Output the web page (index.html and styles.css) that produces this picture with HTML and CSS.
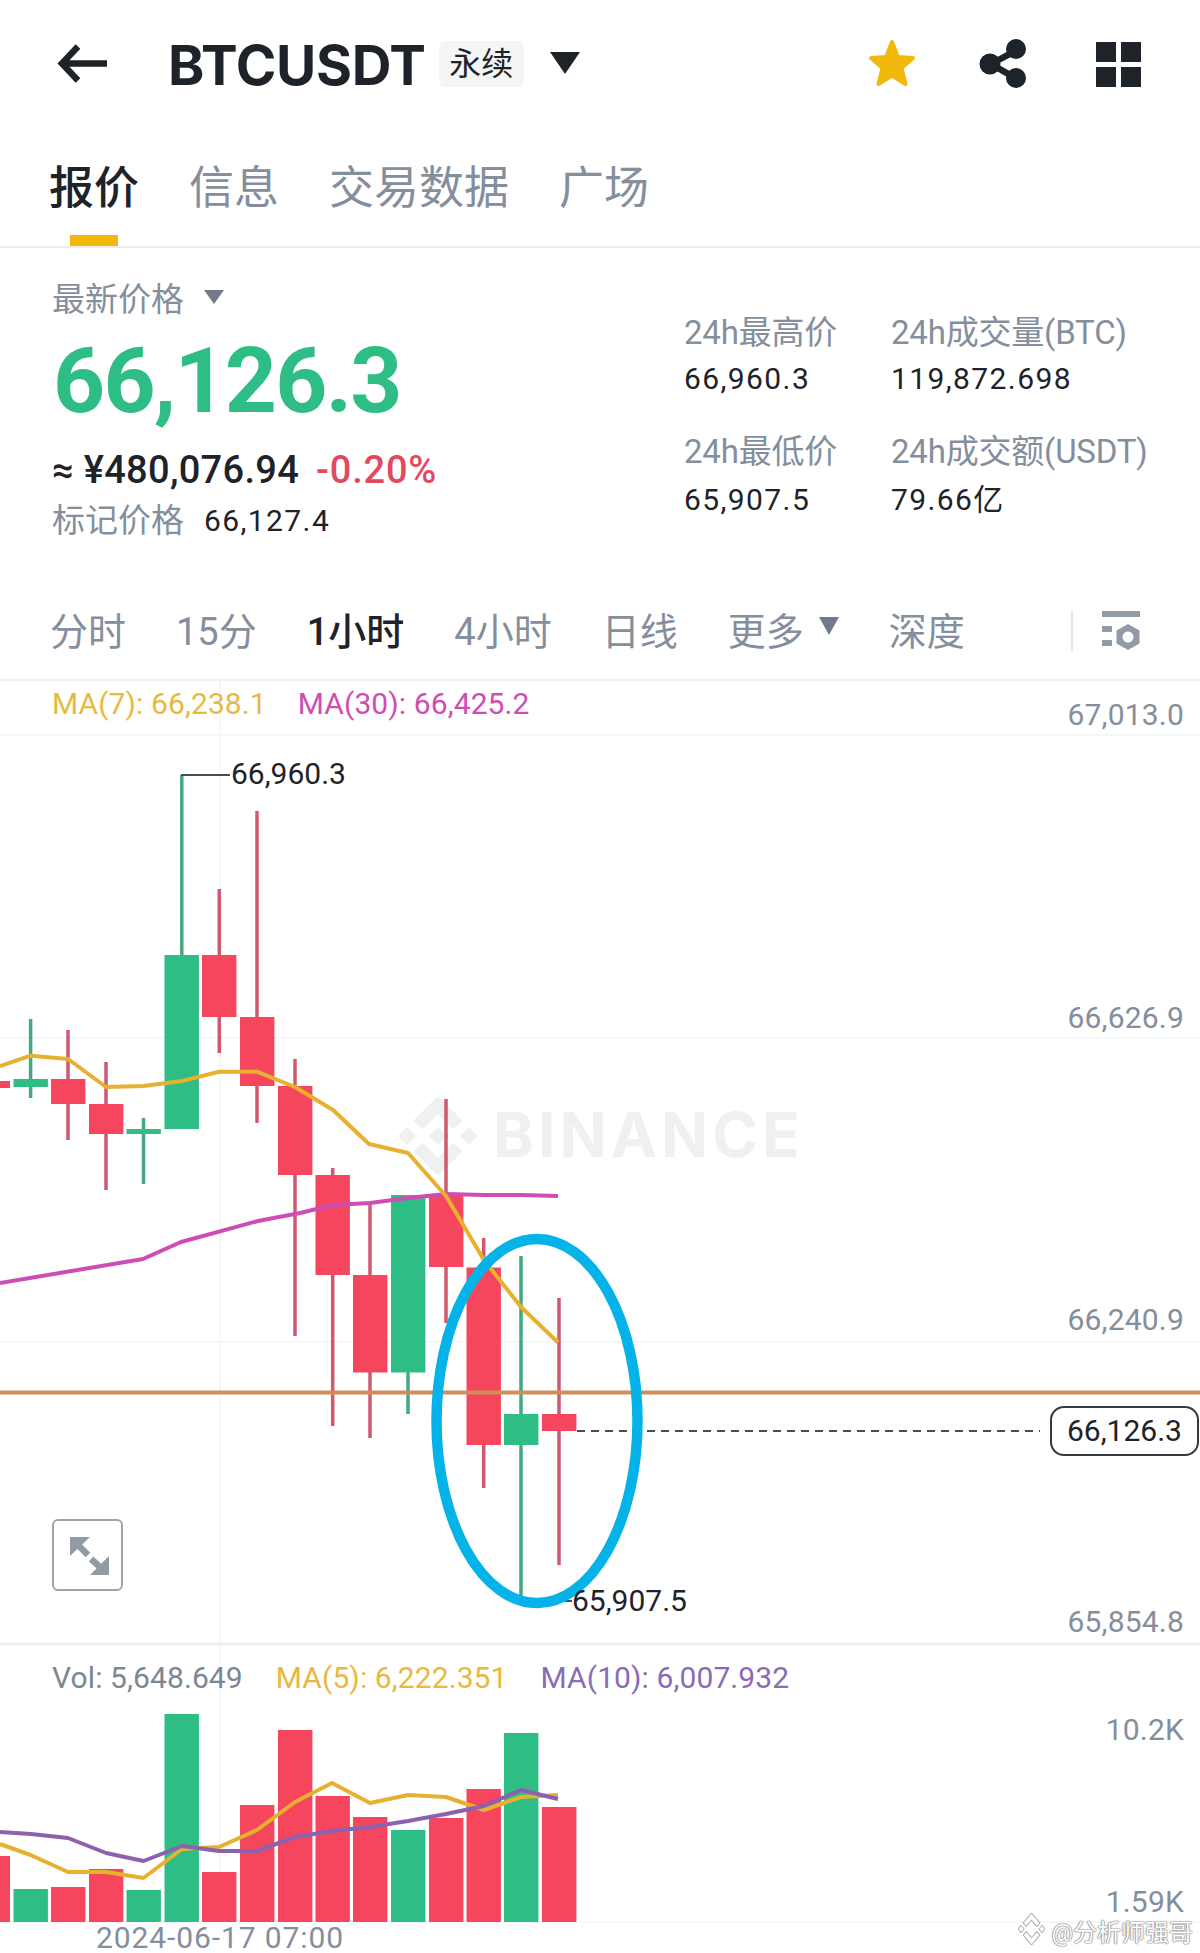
FILE: index.html
```html
<!DOCTYPE html>
<html lang="zh">
<head>
  <meta charset="UTF-8">
  <title>BTCUSDT</title>
  <link rel="stylesheet" href="styles.css">
</head>
<body>
  <!-- top bar -->
  <header class="topbar">
    <svg class="ic-back" width="50" height="40" viewBox="0 0 50 40"><path d="M21 2.500 5 19.500 21 36.500M5 19.500H50" fill="none" stroke="#1e2329" stroke-width="6.500"/></svg>
    <span class="symbol">BTCUSDT</span>
    <span class="badge">永续</span>
    <svg class="ic-caret" width="30" height="22" viewBox="0 0 30 22"><path d="M0 0H30L15 22Z" fill="#1e2329"/></svg>
    <div class="top-icons">
      <svg class="ic-star" width="50" height="50" viewBox="0 0 50 50"><path d="M25 3 31 18 46 19 34.500 29 38.500 45 25 36.500 11.500 45 15.500 29 4 19 19 18Z" fill="#f0b90b" stroke="#f0b90b" stroke-width="4" stroke-linejoin="round"/></svg>
      <svg class="ic-share" width="48" height="50" viewBox="0 0 48 50"><path d="M38 11 12 25 38 40" fill="none" stroke="#1e2329" stroke-width="6.500"/><circle cx="37" cy="10" r="10" fill="#1e2329"/><circle cx="11" cy="25" r="10.500" fill="#1e2329"/><circle cx="37" cy="39" r="10" fill="#1e2329"/></svg>
      <svg width="45" height="45" viewBox="0 0 45 45"><path d="M0 0H20V20H0ZM25 0H45V20H25ZM0 25H20V45H0ZM25 25H45V45H25Z" fill="#1e2329"/></svg>
    </div>
  </header>

  <!-- tabs -->
  <nav class="tabs">
    <a class="tab active">报价</a>
    <a class="tab">信息</a>
    <a class="tab">交易数据</a>
    <a class="tab">广场</a>
  </nav>

  <!-- quote -->
  <section class="quote">
    <div class="quote-main">
      <div class="q-label">最新价格<svg class="ic-small" width="20" height="14" viewBox="0 0 20 14"><path d="M0 0H20L10 14Z" fill="#707a8a"/></svg></div>
      <div class="q-price">66,126.3</div>
      <div class="q-fiat">≈ ¥480,076.94<span class="q-change">-0.20%</span></div>
      <div class="q-mark"><span class="q-label-inline">标记价格</span><span class="q-mark-val">66,127.4</span></div>
    </div>
    <div class="stats">
      <div class="stat-col">
        <div class="st-label">24h最高价</div>
        <div class="st-val">66,960.3</div>
        <div class="st-label st-second">24h最低价</div>
        <div class="st-val">65,907.5</div>
      </div>
      <div class="stat-col">
        <div class="st-label">24h成交量(BTC)</div>
        <div class="st-val">119,872.698</div>
        <div class="st-label st-second">24h成交额(USDT)</div>
        <div class="st-val">79.66亿</div>
      </div>
    </div>
  </section>

  <!-- intervals -->
  <div class="intervals">
    <span>分时</span>
    <span>15分</span>
    <span class="on">1小时</span>
    <span>4小时</span>
    <span>日线</span>
    <span class="more">更多<svg width="20" height="18" viewBox="0 0 20 18"><path d="M0 0H20L10 18Z" fill="#707a8a"/></svg></span>
    <span>深度</span>
    <div class="iv-tools">
      <svg width="38" height="40" viewBox="0 0 38 40"><path d="M0 0H38V6H0ZM0 15H10V21H0ZM0 29H10V35H0Z" fill="#929aa5"/><path d="M26 13 37.500 19.500V32.500L26 39 14.500 32.500V19.500Z" fill="#929aa5"/><circle cx="26" cy="26" r="5.500" fill="#fff"/></svg>
    </div>
  </div>

  <!-- chart -->
  <section class="chart">
    <!-- viewBox is in page coordinates -->
    <svg class="plot" width="1200" height="1272" viewBox="0 681 1200 1272">
      <g class="grid">
        <line x1="0" y1="735" x2="1200" y2="735"/>
        <line x1="0" y1="1038" x2="1200" y2="1038"/>
        <line x1="0" y1="1342" x2="1200" y2="1342"/>
        <line x1="0" y1="1922" x2="1200" y2="1922"/>
        <line x1="220" y1="681" x2="220" y2="1922"/>
      </g>
      <line class="pane-line" x1="0" y1="1644" x2="1200" y2="1644"/>

      <!-- watermark -->
      <svg x="398" y="1096" width="80" height="80" viewBox="0 0 2500 2500"><path class="wm" d="M764.480 1050.520 1250 565l485.750 485.730 282.500-282.500L1250 0 482 768l282.480 282.520M0 1250l282.510-282.550L565 1249.940 282.490 1532.450Zm764.480 199.510L1250 1935l485.740-485.720 282.650 282.350-.14.150L1250 2500 482 1732l-.4-.4 282.880-282.090M1935 1250.120l282.510-282.510L2500 1250.100l-282.500 282.510ZM1536.520 1250h.13L1250 963.190 963.060 1250.100 1250 1537l286.660-286.660Z"/></svg>

      <!-- wicks -->
      <g class="wick-up">
        <line x1="30.600" y1="1019" x2="30.600" y2="1098"/>
        <line x1="143.500" y1="1118" x2="143.500" y2="1184"/>
        <line x1="181.800" y1="775" x2="181.800" y2="955"/>
        <line x1="408" y1="1372" x2="408" y2="1414"/>
      </g>
      <g class="wick-dn">
        <line x1="68" y1="1030" x2="68" y2="1140"/>
        <line x1="106" y1="1062" x2="106" y2="1190"/>
        <line x1="219.300" y1="889" x2="219.300" y2="1053"/>
        <line x1="257" y1="811" x2="257" y2="1123"/>
        <line x1="295" y1="1059" x2="295" y2="1336"/>
        <line x1="332.700" y1="1168" x2="332.700" y2="1426"/>
        <line x1="370" y1="1203" x2="370" y2="1438"/>
        <line x1="446" y1="1099" x2="446" y2="1323"/>
        <line x1="483.700" y1="1238" x2="483.700" y2="1488"/>
        <line x1="559" y1="1298" x2="559" y2="1565"/>
      </g>
      <line class="wick-up thin" x1="521" y1="1256" x2="521" y2="1600"/>

      <!-- candle bodies -->
      <g class="dn">
        <rect x="-10" y="1081" width="20" height="7"/>
        <rect x="51" y="1079" width="34.400" height="25"/>
        <rect x="89" y="1104" width="34.400" height="30"/>
        <rect x="202" y="955" width="34.400" height="62"/>
        <rect x="240" y="1017" width="34.400" height="69"/>
        <rect x="278" y="1086" width="34.400" height="89"/>
        <rect x="315.500" y="1175" width="34.400" height="100"/>
        <rect x="353" y="1275" width="34.400" height="97.500"/>
        <rect x="429" y="1195" width="34.400" height="72"/>
        <rect x="466.500" y="1267.500" width="34.400" height="177.500"/>
        <rect x="542" y="1414" width="34.400" height="17"/>
      </g>
      <g class="up">
        <rect x="13.500" y="1079" width="34.400" height="8"/>
        <rect x="126.500" y="1129" width="34.400" height="5"/>
        <rect x="164.500" y="955" width="34.400" height="174"/>
        <rect x="391" y="1195" width="34.400" height="177.500"/>
        <rect x="504" y="1414" width="34.400" height="31"/>
      </g>

      <!-- price MA lines -->
      <polyline class="l-ma30" points="0,1283 143,1259 181,1242 258,1221 300,1213 333,1205 370,1203 408,1198 446,1194 484,1195 521,1195 558,1196"/>
      <polyline class="l-ma7" points="0,1066 30.600,1055.700 68,1059 106,1087 143.500,1086 182,1081 219,1071.700 257,1071.700 295,1087 333,1110 369,1144 408,1153 446,1196 484,1260 521,1307 558,1342.500"/>

      <!-- last price -->
      <line class="l-last" x1="0" y1="1392.500" x2="1200" y2="1392.500"/>
      <line class="l-dash" x1="577" y1="1431" x2="1040" y2="1431"/>
      <line class="l-lead" x1="181" y1="775" x2="230" y2="775"/>
      <line class="l-lead" x1="565" y1="1601" x2="572" y2="1601"/>

      <!-- volume -->
      <g class="dn">
        <rect x="-10" y="1856" width="20" height="66"/>
        <rect x="51" y="1887" width="34.400" height="35"/>
        <rect x="89" y="1869" width="34.400" height="53"/>
        <rect x="202" y="1872" width="34.400" height="50"/>
        <rect x="240" y="1805" width="34.400" height="117"/>
        <rect x="278" y="1730" width="34.400" height="192"/>
        <rect x="315.500" y="1796" width="34.400" height="126"/>
        <rect x="353" y="1817" width="34.400" height="105"/>
        <rect x="429" y="1818" width="34.400" height="104"/>
        <rect x="466.500" y="1789" width="34.400" height="133"/>
        <rect x="542" y="1807" width="34.400" height="115"/>
      </g>
      <g class="up">
        <rect x="13.500" y="1889" width="34.400" height="33"/>
        <rect x="126.500" y="1890" width="34.400" height="32"/>
        <rect x="164.500" y="1714" width="34.400" height="208"/>
        <rect x="391" y="1830" width="34.400" height="92"/>
        <rect x="504" y="1733" width="34.400" height="189"/>
      </g>
      <polyline class="l-vol5" points="0,1844 30.600,1855 68,1872 106,1872 143.500,1878 182,1849 219,1847 257,1830 295,1802 332,1783 370,1803 408,1795 446,1797 484,1810 521,1797 558,1795"/>
      <polyline class="l-vol10" points="0,1832 31,1834 68,1838 106,1853 143.500,1861 182,1846 219,1851 257,1851 295,1837 332,1831 370,1827 408,1821 446,1814 484,1806 521,1790 558,1799"/>

      <!-- hand drawn mark -->
      <ellipse class="oval" cx="537" cy="1421" rx="100.500" ry="182"/>

      <!-- small corner logo -->
      <svg x="1018" y="1913" width="27" height="32" viewBox="0 0 2500 2500" preserveAspectRatio="none"><path class="wm-small" d="M764.480 1050.520 1250 565l485.750 485.730 282.500-282.500L1250 0 482 768ZM0 1250l282.510-282.550L565 1249.940 282.490 1532.450Zm764.480 199.510L1250 1935l485.740-485.720 282.650 282.350L1250 2500 482 1732ZM1935 1250.120l282.510-282.510L2500 1250.100l-282.500 282.510Z"/></svg>
    </svg>

    <div class="wm-text">BINANCE</div>

    <div class="legend legend-price">
      <span class="c-ma7">MA(7): 66,238.1</span>
      <span class="c-ma30">MA(30): 66,425.2</span>
    </div>
    <div class="legend legend-vol">
      <span class="c-vol">Vol: 5,648.649</span>
      <span class="c-ma7">MA(5): 6,222.351</span>
      <span class="c-ma10">MA(10): 6,007.932</span>
    </div>

    <span class="axis a1">67,013.0</span>
    <span class="axis a2">66,626.9</span>
    <span class="axis a3">66,240.9</span>
    <span class="axis a4">65,854.8</span>
    <span class="axis a5">10.2K</span>
    <span class="axis a6">1.59K</span>

    <span class="mark hi">66,960.3</span>
    <span class="mark lo">65,907.5</span>
    <span class="last-pill">66,126.3</span>
    <span class="date">2024-06-17 07:00</span>
    <span class="credit">@分析师强哥</span>

    <div class="expand">
      <svg width="40" height="40" viewBox="0 0 40 40"><path d="M0 0H20L0 19ZM39 38H20L39 19Z" fill="#929aa5"/><path d="M8 8 18 18M21 22 31 31" stroke="#929aa5" stroke-width="6.500" fill="none"/></svg>
    </div>
  </section>
</body>
</html>
```

FILE: styles.css
```css
* {
  box-sizing: border-box;
}
html, body {
  margin: 0;
  padding: 0;
  background: #fff;
}
body {
  width: 1200px;
  height: 1953px;
  overflow: hidden;
  font-family: Roboto, "Noto Sans CJK SC", sans-serif;
  color: #1e2329;
}

/* top bar */
.topbar {
  height: 128px;
  display: flex;
  align-items: center;
  padding-left: 57px;
}
.symbol {
  margin: 2px 0 0 61px;
  font-family: Inter, sans-serif;
  font-size: 55px;
  font-weight: 700;
  line-height: 60px;
  letter-spacing: -0.3px;
}
.badge {
  margin-left: 13px;
  width: 85px;
  height: 46px;
  background: #f5f5f5;
  border-radius: 6px;
  font-size: 32px;
  line-height: 46px;
  text-align: center;
}
.ic-caret {
  margin-left: 26px;
  margin-top: -2px;
}
.top-icons {
  margin-left: auto;
  display: flex;
  align-items: center;
  gap: 63px;
  padding-right: 59px;
}
.ic-star {
  margin-right: -1px;
}
.ic-share {
  margin-right: 6px;
}

/* tabs */
.tabs {
  height: 120px;
  display: flex;
  gap: 50px;
  padding-left: 49px;
  border-bottom: 2px solid #eaecef;
}
.tab {
  position: relative;
  font-size: 45px;
  line-height: 60px;
  margin-top: 31px;
  color: #848e9c;
}
.tab.active {
  color: #1e2329;
  font-weight: 500;
}
.tab.active::after {
  content: "";
  position: absolute;
  left: 21px;
  top: 76px;
  width: 48px;
  height: 11px;
  background: #f0b90b;
}

/* quote */
.quote {
  height: 322px;
  display: flex;
}
.quote-main {
  width: 684px;
  padding: 33px 0 0 52px;
}
.q-label {
  font-size: 33px;
  line-height: 38px;
  color: #848e9c;
  display: flex;
  align-items: center;
}
.ic-small {
  margin: -6px 0 0 20px;
}
.q-price {
  margin-top: 12px;
  height: 100px;
  padding-left: 1px;
  font-size: 91px;
  font-weight: 700;
  line-height: 100px;
  letter-spacing: -1.8px;
  color: #2ebd85;
}
.q-fiat {
  margin-top: 17px;
  font-size: 38px;
  font-weight: 500;
  line-height: 44px;
  letter-spacing: 0.3px;
}
.q-change {
  margin-left: 17px;
  color: #e2495f;
  letter-spacing: 0.8px;
}
.q-mark {
  margin-top: 9px;
  display: flex;
  align-items: center;
  line-height: 40px;
}
.q-label-inline {
  font-size: 33px;
  color: #848e9c;
}
.q-mark-val {
  margin-left: 20px;
  font-size: 30px;
  letter-spacing: 1.4px;
}

/* 24h stats */
.stats {
  display: flex;
  padding-top: 65px;
}
.stat-col {
  width: 207px;
}
.st-label {
  font-size: 33px;
  line-height: 40px;
  letter-spacing: -0.2px;
  color: #848e9c;
  white-space: nowrap;
}
.st-val {
  margin-top: 6px;
  font-size: 30px;
  line-height: 40px;
  letter-spacing: 1.4px;
  white-space: nowrap;
}
.st-second {
  margin-top: 33px;
}
.st-second + .st-val {
  margin-top: 8px;
}

/* interval row */
.intervals {
  height: 111px;
  padding: 7px 60px 0 50px;
  display: flex;
  align-items: center;
  gap: 50px;
  font-size: 38px;
  color: #848e9c;
  border-bottom: 2px solid #eff0f2;
}
.intervals .on {
  color: #1e2329;
  font-weight: 500;
}
.more {
  display: flex;
  align-items: center;
  gap: 15px;
}
.more svg {
  margin-top: -5px;
}
.iv-tools {
  margin: 5px 0 0 auto;
  padding-left: 29px;
  height: 40px;
  border-left: 2px solid #e6e8ea;
  display: flex;
}

/* chart */
.chart {
  position: relative;
  height: 1272px;
}
.plot {
  display: block;
}
.grid line {
  stroke: #f6f7f8;
  stroke-width: 2;
}
.pane-line {
  stroke: #eef0f2;
  stroke-width: 3;
}
.wm {
  fill: #eef0f1;
}
.wm-small {
  fill: #fff;
  stroke: #a8a8a8;
  stroke-width: 80;
}
.wick-up line, .wick-up {
  stroke: #45a980;
  stroke-width: 3.500;
}
.wick-dn line {
  stroke: #cf5a70;
  stroke-width: 3.500;
}
.up {
  fill: #2ebd85;
}
.dn {
  fill: #f6465d;
}
polyline {
  fill: none;
  stroke-width: 4;
  stroke-linejoin: round;
}
.l-ma7, .l-vol5 {
  stroke: #e8b02f;
}
.l-ma30 {
  stroke: #cf4cb5;
}
.l-vol10 {
  stroke: #8a62ad;
}
.l-last {
  stroke: #d18d5a;
  stroke-width: 4;
}
.l-dash {
  stroke: #474d57;
  stroke-width: 2;
  stroke-dasharray: 8 6;
}
.l-lead {
  stroke: #474d57;
  stroke-width: 2;
}
.oval {
  fill: none;
  stroke: #05b3e8;
  stroke-width: 10.500;
}

/* text over the chart */
.wm-text {
  position: absolute;
  left: 493px;
  top: 419px;
  font-family: Inter, sans-serif;
  font-size: 62px;
  font-weight: 700;
  line-height: 70px;
  letter-spacing: 4px;
  color: #eef0f1;
}
.legend {
  position: absolute;
  left: 52px;
  display: flex;
  font-size: 30px;
  line-height: 36px;
  letter-spacing: 0.1px;
  white-space: nowrap;
}
.legend-price {
  top: 5px;
  gap: 31px;
}
.legend-vol {
  top: 979px;
  gap: 33px;
}
.c-ma7 {
  color: #e8b93f;
}
.c-ma30 {
  color: #cf4cb5;
}
.c-ma10 {
  color: #8a6bb5;
}
.c-vol {
  color: #7c8794;
}
.axis {
  position: absolute;
  right: 16px;
  font-size: 30px;
  line-height: 36px;
  letter-spacing: 0.2px;
  color: #848e9c;
}
.a1 { top: 16px; }
.a2 { top: 319px; }
.a3 { top: 621px; }
.a4 { top: 923px; }
.a5 { top: 1031px; }
.a6 { top: 1203px; }
.mark {
  position: absolute;
  font-size: 30px;
  line-height: 36px;
  color: #1e2329;
}
.hi {
  left: 231px;
  top: 75px;
}
.lo {
  left: 572px;
  top: 902px;
}
.last-pill {
  position: absolute;
  left: 1050px;
  top: 725px;
  width: 149px;
  height: 50px;
  border: 2px solid #333a42;
  border-radius: 14px;
  font-size: 30px;
  line-height: 46px;
  text-align: center;
  background: #fff;
}
.date {
  position: absolute;
  left: 96px;
  top: 1239px;
  font-size: 30px;
  line-height: 36px;
  letter-spacing: 0.9px;
  color: #848e9c;
}
.credit {
  position: absolute;
  right: 7px;
  top: 1235px;
  font-size: 24px;
  line-height: 34px;
  color: #fff;
  text-shadow: 0 0 2px #777, 0 0 1px #777, 0 0 1px #777;
}
.expand {
  position: absolute;
  left: 52px;
  top: 838px;
  width: 71px;
  height: 72px;
  padding: 16px 0 0 16px;
  border: 2px solid #a0a4a8;
  border-radius: 6px;
  background: #fff;
}
.expand svg {
  display: block;
}
```
